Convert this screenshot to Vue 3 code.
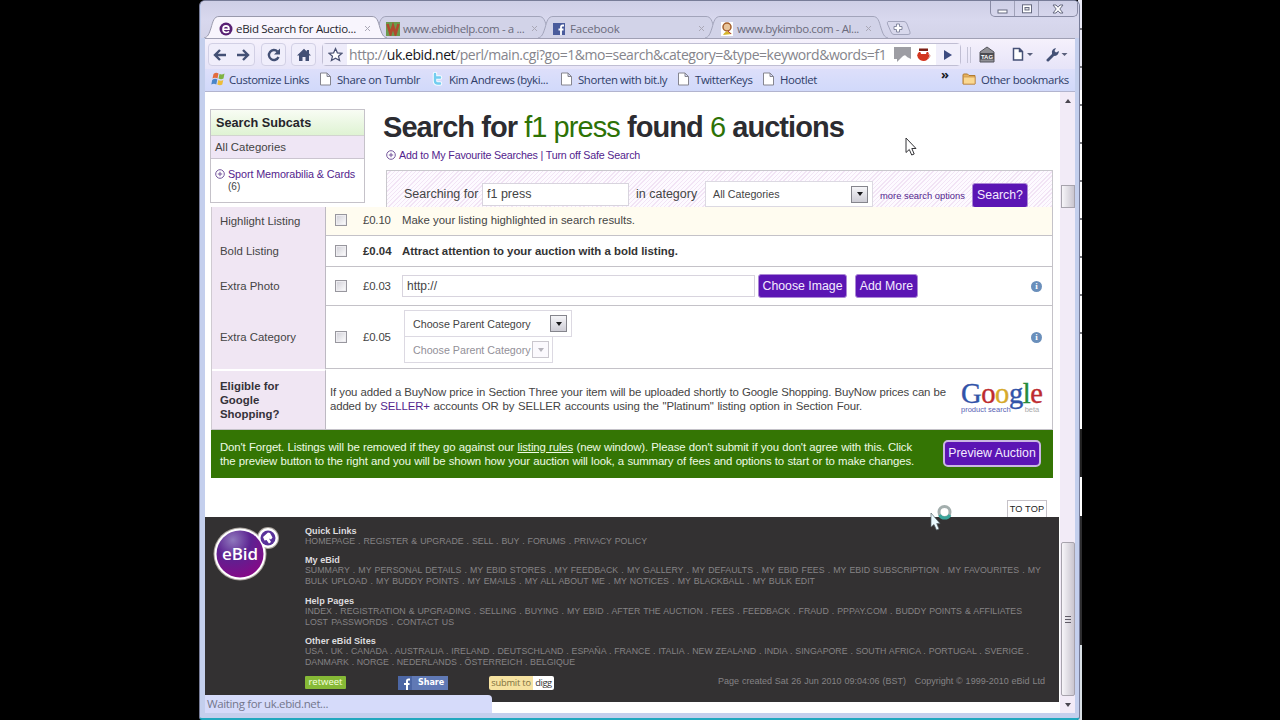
<template>
  <div class="screen">
    <div class="behind">
      <i v-for="n in 9" :key="n" class="behind-mark"></i>
    </div>
    <div class="window">
      <div class="titlebar">
        <div class="tabs">
          <div v-for="(tab, idx) in tabs" :key="tab.title" class="tab" :class="{ active: idx === 0 }">
            <svg class="tab-shape" viewBox="0 0 183 22" width="183" height="22">
              <path d="M0 22 C4 21 5 18 7 12 C9 5 10 .5 15 .5 H168 C173 .5 174 5 176 12 C178 18 179 21 183 22" />
            </svg>
            <svg class="favicon" viewBox="0 0 14 14" width="14" height="14">
              <template v-if="tab.icon === 'ebid'">
                <circle cx="7" cy="7" r="6.5" fill="#582073" />
                <path d="M4 7.2H10C10 2.8 4 2.8 4 7.2C4 11 8 11.200 10 9.300" fill="none" stroke="#fff" stroke-width="1.6" />
              </template>
              <template v-else-if="tab.icon === 'help'">
                <rect width="14" height="14" fill="#6b9b4d" />
                <path d="M1.500 2L4.500 12L7 4L9.500 12L12.500 2" fill="none" stroke="#b04a2e" stroke-width="2.600" />
              </template>
              <template v-else-if="tab.icon === 'fb'">
                <rect y="1" width="12" height="12" fill="#4a5c9c" />
                <path d="M11 3.500H9.500Q8 3.500 8 5V13M5.500 7.500H10.500" fill="none" stroke="#fff" stroke-width="1.800" />
              </template>
              <template v-else>
                <rect x="1" width="12" height="14" fill="#fff" />
                <circle cx="7" cy="5" r="4" fill="#e8c49a" stroke="#a35e2c" stroke-width="1.500" />
                <path d="M3 13Q7 6 12 12Z" fill="#d6b52c" />
                <path d="M8 9L11 12" stroke="#b33c52" />
              </template>
            </svg>
            <span class="tab-title" :class="'t-' + tab.icon">{{ tab.title }}</span>
            <svg class="tab-close" viewBox="0 0 7 7" width="7" height="7"><path d="M1 1L6 6M6 1L1 6" /></svg>
          </div>
          <svg class="new-tab" viewBox="0 0 26 14" width="26" height="14">
            <path d="M2 .5H18Q20 .5 21 3L24 11Q25 13.500 22 13.500H8Q6 13.500 5 11L1.500 3Q1 .5 2 .5Z" fill="#d8d8ec" stroke="#a3a5bd" />
            <path d="M10.500 3H13.500V5.500H16V8.500H13.500V11H10.500V8.500H8V5.500H10.500Z" fill="#fff" stroke="#7b7f98" stroke-width=".9" />
          </svg>
        </div>
        <div class="win-buttons">
          <span class="wb"><svg viewBox="0 0 12 10" width="12" height="10"><rect x="1" y="6" width="9" height="3" fill="#fff" stroke="#666a80" /></svg></span>
          <span class="wb"><svg viewBox="0 0 12 10" width="12" height="10"><rect x="1.500" y=".8" width="9" height="8" fill="#fff" stroke="#666a80" /><rect x="4" y="3.500" width="4" height="2.500" fill="#ddd" stroke="#666a80" /></svg></span>
          <span class="wb wide"><svg viewBox="0 0 12 10" width="12" height="10"><path d="M1 1H4L6 3.200L8 1H11L7.800 5L11 9H8L6 6.800L4 9H1L4.200 5Z" fill="#fff" stroke="#666a80" /></svg></span>
        </div>
      </div>

      <div class="toolbar">
        <div class="nav-group">
          <svg viewBox="0 0 14 12" width="14" height="12"><path d="M13 6H3M7 1L2 6L7 11" class="nav-stroke" /></svg>
          <svg viewBox="0 0 14 12" width="14" height="12"><path d="M1 6H11M7 1L12 6L7 11" class="nav-stroke" /></svg>
        </div>
        <div class="nav-btn reload">
          <svg viewBox="0 0 14 14" width="14" height="14"><path d="M11.500 9A5 5 0 1 1 10.500 3.500" class="nav-stroke" /><path d="M13 .5V6.500H7Z" fill="#435075" /></svg>
        </div>
        <div class="nav-btn home">
          <svg viewBox="0 0 14 14" width="14" height="14"><path d="M7 .8L0 7.500H2V13H5.500V9H8.500V13H12V7.500H14L12 5.500V2H9.800V3.500Z" fill="#435075" /></svg>
        </div>
        <div class="omnibox">
          <div class="star">
            <svg viewBox="0 0 16 15" width="15" height="15"><path d="M8 1.200L10 5.700L15 6.200L11.200 9.400L12.400 14L8 11.500L3.600 14L4.800 9.400L1 6.200L6 5.700Z" fill="#fff" stroke="#4a5272" stroke-width="1.300" /></svg>
          </div>
          <div class="url">
            <span class="url-text">http://<b>uk.ebid.net</b>/perl/main.cgi?go=1&amp;mo=search&amp;category=&amp;type=keyword&amp;words=f1</span>
            <svg class="url-flag" viewBox="0 0 18 17" width="18" height="17"><path d="M0 1H17V13L13 11Q11 7 7 12L3 16V13H0Z" fill="#9d9da3" /></svg>
            <svg class="url-pot" viewBox="0 0 16 15" width="16" height="15">
              <path d="M3 1.500H12V4H3Z" fill="#7d1f16" />
              <path d="M3 5Q-1 9 4 13Q8 15 11 13Q15 9 12 5Z" fill="#d3351f" />
              <path d="M4 4H11L10 7H5Z" fill="#fff" />
              <path d="M12 7Q16 8 12 12" fill="none" stroke="#d98f86" />
            </svg>
          </div>
          <div class="go"><svg viewBox="0 0 10 12" width="10" height="12"><path d="M1 1L9 6L1 11Z" fill="#3c4b80" /></svg></div>
        </div>
        <div class="grip"></div>
        <svg class="tag" viewBox="0 0 16 17" width="16" height="17">
          <path d="M1 6L8 1L15 6V16H1Z" fill="#909095" stroke="#55555c" />
          <rect x="1" y="7" width="14" height="6.500" fill="#4b4b50" />
          <text x="8" y="12.500" text-anchor="middle" font-size="6" font-weight="700" fill="#fff" font-family="Liberation Sans, sans-serif">TAG</text>
        </svg>
        <svg class="page-menu" viewBox="0 0 21 15" width="21" height="15"><path d="M1.500 1.500H7.500L10.500 4.500V13H1.500ZM7.500 1.500V4.500H10.500" fill="#fff" stroke="#455076" stroke-width="1.500" /><path d="M15 6H21L18 9Z" fill="#59607c" /></svg>
        <svg class="wrench" viewBox="0 0 23 15" width="23" height="15"><path d="M1.500 12.500L7 7Q6 2 11 1L9.500 4L11 5.500L14 4Q13.500 9 9 9L3.500 14.500Q1 15 1.500 12.500Z" fill="#435075" /><path d="M16.500 6H22.500L19.500 9Z" fill="#59607c" /></svg>
      </div>

      <div class="bookmarks">
        <div v-for="bm in bookmarks" :key="bm.text" class="bm" :style="{ width: bm.width + 'px' }">
          <svg v-if="bm.icon === 'windows'" viewBox="0 0 15 14" width="15" height="14">
            <path d="M2.500 2Q5 0 7.500 1.500L6.500 6.500Q4 5 1.500 6.500Z" fill="#e26b3e" /><path d="M8.500 2Q11 3 13.500 1.500L12.500 6.500Q10 8 7.500 6.500Z" fill="#7fb344" />
            <path d="M1.200 8Q4 6 6.300 7.500L5.300 12.500Q3 11 .3 12.500Z" fill="#4a86c9" /><path d="M7.300 8Q10 9.500 12.300 8L11.300 12.500Q9 14 6.300 12.500Z" fill="#edbd3a" />
          </svg>
          <svg v-else-if="bm.icon === 'twitter'" viewBox="0 0 15 14" width="15" height="14"><path d="M4 2V9Q4 11.500 7 11.500H9M4 5.500H9" fill="none" stroke="#f4fbff" stroke-width="4.500" stroke-linecap="round" /><path d="M4 2V9Q4 11.500 7 11.500H9M4 5.500H9" fill="none" stroke="#72cdf0" stroke-width="2.400" stroke-linecap="round" /></svg>
          <svg v-else viewBox="0 0 15 14" width="15" height="14"><path d="M1.500 1H8L11.500 4.500V13H1.500ZM8 1V4.500H11.500" fill="#fff" stroke="#85858f" /></svg>
          <span>{{ bm.text }}</span>
        </div>
        <div class="bm-more">»</div>
        <div class="bm other">
          <svg viewBox="0 0 15 14" width="15" height="14"><path d="M1 3Q1 2 2 2H5.500L7 3.500H13V12H1Z" fill="#e7b25e" stroke="#b17b31" /><path d="M1.500 5H13V12H1.500Z" fill="#fad891" stroke="#c38e42" stroke-width=".7" /></svg>
          <span>Other bookmarks</span>
        </div>
      </div>

      <div class="viewport">
        <div class="page">
          <div class="search-page">
            <div class="subcats">
              <div class="sub-head">Search Subcats</div>
              <div class="sub-all">All Categories</div>
              <div class="sub-item">
                <svg class="plus" viewBox="0 0 10 10" width="10" height="10"><circle cx="5" cy="5" r="4.300" /><path d="M2.800 5H7.200M5 2.800V7.200" /></svg>
                <div class="sub-link"><a>Sport Memorabilia &amp; Cards</a><small>(6)</small></div>
              </div>
            </div>
            <div class="results">
              <h1>Search for <em>f1 press</em> found <em>6</em> auctions</h1>
              <div class="fav">
                <svg class="plus" viewBox="0 0 10 10" width="10" height="10"><circle cx="5" cy="5" r="4.300" /><path d="M2.800 5H7.200M5 2.800V7.200" /></svg>
                <span class="fav-text">Add to My Favourite Searches | Turn off Safe Search</span>
              </div>
              <div class="search-box">
                <span class="searching">Searching for</span>
                <div class="input term">f1 press</div>
                <span class="in-cat">in category</span>
                <div class="select cat"><span>All Categories</span><i class="arrow"></i></div>
                <a class="more">more search options</a>
                <div class="btn search-btn">Search?</div>
              </div>
            </div>
          </div>

          <div class="listing">
            <div class="row highlight">
              <div class="label">Highlight Listing</div>
              <div class="cell"><i class="check"></i><span class="price">£0.10</span><span class="desc">Make your listing highlighted in search results.</span></div>
            </div>
            <div class="row bold">
              <div class="label">Bold Listing</div>
              <div class="cell"><i class="check"></i><span class="price">£0.04</span><span class="desc">Attract attention to your auction with a bold listing.</span></div>
            </div>
            <div class="row photo">
              <div class="label">Extra Photo</div>
              <div class="cell">
                <i class="check"></i><span class="price">£0.03</span>
                <div class="input http">http://</div>
                <div class="btn choose">Choose Image</div>
                <div class="btn add">Add More</div>
                <i class="info">i</i>
              </div>
            </div>
            <div class="row category">
              <div class="label">Extra Category</div>
              <div class="cell">
                <i class="check"></i><span class="price">£0.05</span>
                <div class="selects">
                  <div class="select parent"><span>Choose Parent Category</span><i class="arrow"></i></div>
                  <div class="select parent off"><span>Choose Parent Category</span><i class="arrow"></i></div>
                </div>
                <i class="info">i</i>
              </div>
            </div>
            <div class="row google">
              <div class="label">Eligible for<br>Google<br>Shopping?</div>
              <div class="cell">
                <div class="buynow">
                  <div class="fit tight w615">If you added a BuyNow price in Section Three your item will be uploaded shortly to Google Shopping. BuyNow prices can be</div>
                  <div class="fit tight w531">added by <a>SELLER+</a> accounts OR by SELLER accounts using the "Platinum" listing option in Section Four.</div>
                </div>
                <div class="glogo">
                  <div class="gword"><span class="gb">G</span><span class="gr">o</span><span class="gy">o</span><span class="gb">g</span><span class="gg">l</span><span class="gr">e</span></div>
                  <div class="gsub"><span>product search</span><span class="beta">beta</span></div>
                </div>
              </div>
            </div>
            <div class="notice">
              <div class="notice-text">
                <div class="fit tight w692">Don't Forget. Listings will be removed if they go against our <u>listing rules</u> (new window). Please don't submit if you don't agree with this. Click</div>
                <div class="fit tight w694">the preview button to the right and you will be shown how your auction will look, a summary of fees and options to start or to make changes.</div>
              </div>
              <div class="btn preview">Preview Auction</div>
            </div>
          </div>

          <div class="top-strip"><div class="to-top">TO TOP</div></div>

          <div class="footer">
            <svg class="logo" viewBox="0 0 68 58" width="68" height="58">
              <defs>
                <radialGradient id="orb" cx=".35" cy=".2" r=".85"><stop offset="0" stop-color="#8f79bd" /><stop offset=".45" stop-color="#5c2291" /><stop offset="1" stop-color="#870887" /></radialGradient>
              </defs>
              <circle cx="55" cy="13" r="11" fill="#aaa49e" /><circle cx="27" cy="29" r="26.500" fill="#aaa49e" />
              <circle cx="55" cy="13" r="10" fill="#fff" /><circle cx="27" cy="29" r="25.500" fill="#fff" />
              <circle cx="27" cy="29" r="23.500" fill="url(#orb)" />
              <circle cx="55" cy="13" r="7.500" fill="#59319a" />
              <path d="M50 12L55 7.500L57 8L59.500 12.500L58 14.500L56 13.500L58 17L56 18.500L53.500 15L51.500 15.500Z" fill="#fff" />
              <text x="27" y="35" text-anchor="middle" font-size="17" font-weight="600" fill="#fff" textLength="36" font-family="Open Sans, sans-serif">eBid</text>
            </svg>
            <div class="links">
              <div v-for="group in footerGroups" :key="group.title" class="group">
                <h4>{{ group.title }}</h4>
                <div v-for="line in group.lines" :key="line.text" class="fit link-line" :style="{ width: line.width + 'px' }">{{ line.text }}</div>
              </div>
              <div class="share-row">
                <span class="retweet">retweet</span>
                <span class="fb-share"><svg viewBox="0 0 14 14" width="14" height="14"><rect width="14" height="14" fill="#4c66a4" /><path d="M12 3.500H10.500Q9 3.500 9 5V14M6 8H11.500" fill="none" stroke="#fff" stroke-width="2" /></svg><b>Share</b></span>
                <span class="digg"><span class="submit">submit to</span><span class="digg-name">digg</span></span>
                <span class="fit copyright">Page created Sat 26 Jun 2010 09:04:06 (BST) &nbsp; Copyright © 1999-2010 eBid Ltd</span>
              </div>
            </div>
          </div>
        </div>

        <div class="scrollbar">
          <svg class="sb-arrow" viewBox="0 0 6 4" width="6" height="4"><path d="M0 4L3 0L6 4Z" /></svg>
          <div class="old-thumb"></div>
          <div class="thumb"><i></i><i></i><i></i></div>
          <svg class="sb-arrow" viewBox="0 0 6 4" width="6" height="4"><path d="M0 0L3 4L6 0Z" /></svg>
        </div>
        <div class="status">Waiting for uk.ebid.net...</div>
      </div>
    </div>

    <svg class="cursor arrow-cursor" viewBox="0 0 12 19" width="12" height="19"><path d="M1 1V15.500L4.300 12.500L6.700 18L9.200 17L6.800 11.500H11Z" fill="#fff" stroke="#343438" /></svg>
    <svg class="cursor busy-cursor" viewBox="0 0 24 28" width="24" height="28">
      <circle cx="14.500" cy="8" r="5.500" fill="#fff" stroke="#a3aead" stroke-width="3" />
      <path d="M9.500 11A6 6 0 0 0 20 11" fill="none" stroke="#39a59b" stroke-width="3" />
      <path d="M1 9V23L4 20.500L6.500 26L9 25L6.700 19.500H10Z" fill="#eafaff" stroke="#58666c" stroke-width=".7" />
    </svg>
  </div>
</template>

<script setup>
const tabs = [
  { title: 'eBid Search for Auctio...', icon: 'ebid' },
  { title: 'www.ebidhelp.com - a ...', icon: 'help' },
  { title: 'Facebook', icon: 'fb' },
  { title: 'www.bykimbo.com - Al...', icon: 'kimbo' }
];

const bookmarks = [
  { text: 'Customize Links', icon: 'windows', width: 108 },
  { text: 'Share on Tumblr', icon: 'page', width: 112 },
  { text: 'Kim Andrews (byki...', icon: 'twitter', width: 129 },
  { text: 'Shorten with bit.ly', icon: 'page', width: 117 },
  { text: 'TwitterKeys', icon: 'page', width: 85 },
  { text: 'Hootlet', icon: 'page', width: 60 }
];

const footerGroups = [
  {
    title: 'Quick Links',
    lines: [{ text: 'HOMEPAGE . REGISTER & UPGRADE . SELL . BUY . FORUMS . PRIVACY POLICY', width: 342 }]
  },
  {
    title: 'My eBid',
    lines: [
      { text: 'SUMMARY . MY PERSONAL DETAILS . MY EBID STORES . MY FEEDBACK . MY GALLERY . MY DEFAULTS . MY EBID FEES . MY EBID SUBSCRIPTION . MY FAVOURITES . MY', width: 736 },
      { text: 'BULK UPLOAD . MY BUDDY POINTS . MY EMAILS . MY ALL ABOUT ME . MY NOTICES . MY BLACKBALL . MY BULK EDIT', width: 510 }
    ]
  },
  {
    title: 'Help Pages',
    lines: [
      { text: 'INDEX . REGISTRATION & UPGRADING . SELLING . BUYING . MY EBID . AFTER THE AUCTION . FEES . FEEDBACK . FRAUD . PPPAY.COM . BUDDY POINTS & AFFILIATES', width: 717 },
      { text: 'LOST PASSWORDS . CONTACT US', width: 149 }
    ]
  },
  {
    title: 'Other eBid Sites',
    lines: [
      { text: 'USA . UK . CANADA . AUSTRALIA . IRELAND . DEUTSCHLAND . ESPAÑA . FRANCE . ITALIA . NEW ZEALAND . INDIA . SINGAPORE . SOUTH AFRICA . PORTUGAL . SVERIGE .', width: 724 },
      { text: 'DANMARK . NORGE . NEDERLANDS . ÖSTERREICH . BELGIQUE', width: 270 }
    ]
  }
];
</script>

<style>
body {
  background: #000;
}
</style>

<style scoped>
* {
  box-sizing: border-box;
}
.screen {
  position: relative;
  width: 1280px;
  height: 720px;
  overflow: hidden;
  background: #000;
  padding-left: 199px;
  font-family: 'Liberation Sans', Arial, sans-serif;
  font-size: 11.4px;
  color: #444;
}
svg {
  display: block;
  flex-shrink: 0;
}
a {
  color: #53248d;
}
.behind {
  position: absolute;
  left: 1078px;
  top: 0;
  width: 4px;
  height: 720px;
  background: linear-gradient(#e9e9f4 0 90px, #fff 90px 429px, #222 429px 477px, #fff 477px 516px, #2d2d2f 516px 645px, #d9dfe4 645px 720px);
  display: flex;
  flex-direction: column;
  gap: 36px;
  padding-top: 28px;
}
.behind-mark {
  width: 4px;
  height: 2px;
  background: #77777d;
}
.window {
  position: relative;
  width: 881px;
  height: 720px;
  padding-left: 1px;
  border: 1px solid #777c98;
  border-bottom: 2px solid #21a8bf;
  border-radius: 6px 6px 3px 3px;
  background: #c4cfed;
  display: flex;
  flex-direction: column;
  overflow: hidden;
  font-family: 'Open Sans', 'Noto Sans', sans-serif;
}
.titlebar {
  height: 37px;
  flex-shrink: 0;
  background: linear-gradient(#cecfe6, #d8d8ee 50%, #d3d3e8);
  display: flex;
  justify-content: space-between;
  padding-left: 3px;
}
.tabs {
  display: flex;
  align-items: flex-end;
}
.tab {
  position: relative;
  width: 183px;
  height: 22px;
  margin-right: -16px;
  display: flex;
  align-items: center;
  padding: 3px 16px 0 15px;
  color: #6b6b7c;
}
.tab.active {
  color: #25252d;
  z-index: 2;
}
.tab-shape {
  position: absolute;
  left: 0;
  top: 0;
  fill: #d2d3e8;
  stroke: #a2a4ba;
}
.active .tab-shape {
  fill: #f8f5fd;
  stroke: #9999ac;
}
.favicon {
  position: relative;
}
.tab-title {
  position: relative;
  margin-left: 3px;
  flex: 1;
  font-size: 11.5px;
  white-space: nowrap;
  letter-spacing: -0.3px;
}
.t-fb { letter-spacing: -0.2px; }
.t-help, .t-kimbo { letter-spacing: -0.4px; }
.tab-close {
  position: relative;
  stroke: #aaa8b6;
  fill: none;
}
.new-tab {
  margin: 0 0 3px 14px;
}
.win-buttons {
  display: flex;
  height: 16px;
  width: 88px;
  margin-right: 1px;
  border: 1px solid #898ba5;
  border-top: 0;
  border-radius: 0 0 5px 5px;
}
.wb {
  width: 24px;
  display: flex;
  justify-content: center;
  align-items: center;
  border-right: 1px solid #a0a1b8;
}
.wb.wide {
  flex: 1;
  border: 0;
}
.toolbar {
  height: 31px;
  flex-shrink: 0;
  margin: 0 4px;
  border-top: 1px solid #a0a0b4;
  background: linear-gradient(#f5f1fc, #e6e4f8);
  display: flex;
  align-items: center;
  padding: 1px 0 0 3px;
}
.nav-group, .nav-btn {
  height: 23px;
  border: 1px solid #d2d0e5;
  border-radius: 4px;
  background: #f0eefb;
  display: flex;
  align-items: center;
  justify-content: center;
}
.nav-group {
  width: 47px;
  gap: 9px;
}
.nav-btn {
  width: 25px;
}
.reload { margin-left: 6px; }
.home { margin-left: 5px; }
.nav-stroke {
  fill: none;
  stroke: #435075;
  stroke-width: 2.4;
}
.omnibox {
  margin-left: 6px;
  width: 639px;
  height: 23px;
  border: 1px solid #c0bed3;
  border-radius: 4px;
  display: flex;
}
.star {
  width: 24px;
  display: flex;
  align-items: center;
  justify-content: center;
  background: #eeecfa;
}
.url {
  flex: 1;
  background: #fff;
  display: flex;
  align-items: center;
  padding-left: 2px;
}
.url-text {
  width: 541px;
  font-size: 14px;
  color: #85858c;
  white-space: nowrap;
  letter-spacing: -0.46px;
}
.url-text b {
  font-weight: 400;
  color: #15151a;
}
.url-flag { margin-left: 4px; }
.url-pot { margin-left: 4px; }
.go {
  width: 24px;
  background: #f1effb;
  display: flex;
  align-items: center;
  justify-content: center;
}
.grip {
  width: 4px;
  height: 16px;
  margin-left: 6px;
  border-left: 1px solid #c4c3d6;
  border-right: 1px solid #c4c3d6;
}
.tag { margin-left: 8px; }
.page-menu { margin-left: 17px; }
.wrench { margin-left: 12px; }
.bookmarks {
  height: 23px;
  flex-shrink: 0;
  margin: 0 4px;
  padding: 0 0 2px 6px;
  border-bottom: 1px solid #b2b4ce;
  background: linear-gradient(#dddffa, #d1d9fa);
  display: flex;
  align-items: center;
  color: #2e3c68;
  font-size: 11.4px;
}
.bm {
  display: flex;
  align-items: center;
  gap: 3px;
  white-space: nowrap;
  letter-spacing: -0.38px;
}
.bm-more {
  margin-left: 119px;
  margin-top: -10px;
  width: 21px;
  font-size: 13px;
  font-weight: 700;
  color: #181a22;
}
.other {
  gap: 4px;
}
.viewport {
  position: relative;
  height: 621px;
  margin: 0 4px;
  display: flex;
  background: #fff;
  font-family: 'Liberation Sans', Arial, sans-serif;
}
.page {
  width: 854px;
  display: flex;
  flex-direction: column;
}
.search-page {
  height: 115px;
  padding-left: 6px;
  display: flex;
  overflow: hidden;
}
.subcats {
  width: 155px;
  height: 94px;
  margin-top: 17px;
  border: 1px solid #c5c2c9;
  margin-left: -1px;
}
.sub-head {
  height: 26px;
  padding-left: 5px;
  line-height: 26px;
  font-size: 12.7px;
  font-weight: 700;
  color: #25252a;
  background: linear-gradient(#f8fcf4, #dff3d3);
  border-bottom: 1px solid #d2d4d0;
}
.sub-all {
  height: 23px;
  line-height: 23px;
  padding-left: 4px;
  background: #efe6f5;
  border-bottom: 1px solid #cbc5d0;
}
.sub-item {
  display: flex;
  padding: 9px 0 0 4px;
}
.plus {
  fill: none;
  stroke: #74559b;
  margin: 1px 3px 0 0;
}
.sub-link a {
  display: block;
  font-size: 10.8px;
  letter-spacing: -0.1px;
  line-height: 13px;
  white-space: nowrap;
}
.sub-link small {
  display: block;
  font-size: 10px;
  line-height: 12px;
}
.results {
  margin-left: 18px;
  width: 670px;
}
h1 {
  margin: 16px 0 0;
  height: 38px;
  line-height: 38px;
  font-size: 29px;
  letter-spacing: -0.94px;
  white-space: nowrap;
  color: #2c2c31;
}
h1 em {
  font-style: normal;
  font-weight: 400;
  color: #2d7206;
}
.fav {
  display: flex;
  margin: 3px 0 0 3px;
  height: 14px;
  line-height: 13px;
}
.fav-text {
  font-size: 10.7px;
  letter-spacing: -0.18px;
  color: #53248d;
}
.search-box {
  margin: 7px 0 0 3px;
  height: 48px;
  border: 1px solid #c9c8cd;
  border-bottom: 0;
  background: repeating-linear-gradient(135deg, #fdfaff 0 2px, #f2e4f5 2px 3px);
  display: flex;
  padding: 12px 0 0 17px;
  white-space: nowrap;
  font-size: 12.5px;
}
.searching, .in-cat {
  line-height: 23px;
}
.searching { width: 78px; }
.input {
  border: 1px solid #d8d4de;
  background: #fff;
  padding-left: 4px;
  line-height: 20px;
}
.term {
  width: 147px;
  height: 23px;
}
.in-cat { margin-left: 7px; width: 69px; }
.select {
  background: #fff;
  border: 1px solid #dcd9e2;
  display: flex;
  align-items: center;
  justify-content: space-between;
  font-size: 10.7px;
}
.cat {
  width: 168px;
  height: 26px;
  margin-top: -2px;
  padding: 0 4px 0 7px;
}
.arrow {
  flex-shrink: 0;
  width: 17px;
  height: 17px;
  border: 1px solid #85858c;
  background: linear-gradient(#f5f5f8, #cecdd5);
  display: flex;
  align-items: center;
  justify-content: center;
}
.arrow::after {
  content: '';
  border: 3px solid transparent;
  border-top: 4px solid #17171a;
  border-bottom: 0;
}
.more {
  margin-left: 7px;
  width: 92px;
  font-size: 9.4px;
  line-height: 26px;
}
.btn {
  background: #5b15b4;
  border: 1px solid #ac88d6;
  border-radius: 3px;
  color: #f4ebff;
  font-size: 12.3px;
  text-align: center;
  white-space: nowrap;
}
.search-btn {
  width: 56px;
  height: 25px;
  line-height: 23px;
}
.listing {
  margin-left: 6px;
  width: 842px;
  height: 271px;
  border-left: 1px solid #cfcad1;
  display: flex;
  flex-direction: column;
}
.row {
  display: flex;
  flex-shrink: 0;
}
.label {
  width: 114px;
  background: #f0e6f3;
  border-right: 1px solid #bdb9c2;
  padding: 0 0 2px 8px;
  display: flex;
  align-items: center;
}
.cell {
  flex: 1;
  display: flex;
  align-items: center;
  border-bottom: 1px solid #c4c2c8;
  border-right: 1px solid #c4c2c8;
  padding-left: 9px;
  white-space: nowrap;
}
.highlight { height: 29px; }
.highlight .cell { background: #fffcf0; padding-bottom: 2px; }
.bold { height: 31px; }
.bold .cell { font-weight: 700; color: #333; }
.photo { height: 39px; }
.category { height: 63px; }
.google { height: 61px; }
.google .label {
  border-top: 2px solid #fff;
  border-bottom: 1px solid #c4c2c8;
  padding-bottom: 0;
  font-weight: 700;
  line-height: 14px;
  color: #35323a;
}
.check {
  width: 12px;
  height: 12px;
  border: 1px solid #98979e;
  background: linear-gradient(135deg, #cfced6, #fff);
  box-shadow: inset 0 0 0 1px #eeedf1;
}
.price {
  margin-left: 16px;
  width: 39px;
  letter-spacing: -0.15px;
}
.bold .price, .bold .desc { letter-spacing: 0; }
.http {
  width: 353px;
  height: 22px;
  font-size: 12px;
}
.choose {
  width: 89px;
  height: 24px;
  margin-left: 3px;
  line-height: 22px;
}
.add {
  width: 63px;
  height: 24px;
  margin-left: 8px;
  line-height: 22px;
}
.info {
  width: 11px;
  height: 11px;
  margin: 0 10px 0 auto;
  border-radius: 50%;
  background: #6a8fbb;
  color: #fff;
  font: 700 9px/11px 'Liberation Serif', serif;
  text-align: center;
}
.selects {
  margin-left: 2px;
  padding-bottom: 1px;
}
.parent {
  width: 168px;
  height: 27px;
  padding: 0 4px 0 8px;
}
.parent.off {
  width: 149px;
  height: 26px;
  border-top: 0;
  padding-right: 3px;
  color: #929098;
}
.off .arrow {
  border-color: #cac7ce;
  background: #fbf9fd;
}
.off .arrow::after {
  border-top-color: #b5b3bb;
}
.fit {
  text-align: justify;
  text-align-last: justify;
  white-space: nowrap;
}
.tight { letter-spacing: -0.13px; }
.w615 { width: 616px; }
.w531 { width: 532px; }
.w692 { width: 692px; }
.w694 { width: 694px; }
.google .cell { padding-left: 4px; }
.buynow {
  width: 616px;
  line-height: 14px;
  padding-bottom: 1px;
}
.glogo {
  margin: 0 0 4px 15px;
  width: 84px;
  height: 34px;
}
.gword {
  font-family: 'Liberation Serif', serif;
  font-size: 28.500px;
  line-height: 28px;
  letter-spacing: -0.4px;
  height: 25px;
  -webkit-text-stroke: 0.4px;
}
.gb { color: #3153a8; }
.gr { color: #bd2b2f; }
.gy { color: #d6a929; }
.gg { color: #278b39; }
.gsub {
  display: flex;
  gap: 14px;
  font-size: 7.5px;
  line-height: 9px;
  color: #5a62b5;
}
.beta { color: #aaa; }
.notice {
  height: 48px;
  background: #347504;
  color: #effbe5;
  display: flex;
  margin-left: -1px;
  padding: 10px 0 0 9px;
  line-height: 14px;
}
.notice-text { width: 694px; }
.preview {
  width: 98px;
  height: 27px;
  margin: 0 0 0 29px;
  border: 2px solid #cab6e3;
  border-radius: 5px;
  line-height: 23px;
}
.top-strip {
  height: 39px;
  display: flex;
  justify-content: flex-end;
  align-items: flex-end;
  padding-right: 12px;
}
.to-top {
  width: 40px;
  height: 17px;
  border: 1px solid #c6c2c8;
  border-bottom: 0;
  text-align: center;
  line-height: 17px;
  font-size: 9.2px;
  letter-spacing: 0.15px;
  color: #222;
  white-space: nowrap;
}
.footer {
  height: 185px;
  background: #333132;
  display: flex;
  padding: 9px 0 0 8px;
}
.logo {
  margin-top: -1px;
}
.links {
  margin-left: 24px;
  color: #858385;
  font-size: 8.8px;
}
.group {
  margin-bottom: 8px;
}
h4 {
  margin: 0;
  height: 10px;
  line-height: 10px;
  font-size: 9.1px;
  color: #dedcdf;
}
.link-line {
  height: 11.2px;
  line-height: 11px;
}
.share-row {
  display: flex;
  align-items: center;
  height: 15px;
  width: 740px;
  margin-top: -1px;
  white-space: nowrap;
}
.retweet {
  width: 41px;
  height: 13px;
  background: #86b936;
  color: #f4ffdf;
  font: 9.5px/12px 'Open Sans', sans-serif;
  text-align: center;
  border-radius: 1px;
}
.fb-share {
  margin-left: 52px;
  width: 50px;
  height: 14px;
  background: #6079b5;
  color: #fff;
  display: flex;
  align-items: center;
  gap: 6px;
  font: 8px 'DejaVu Sans', sans-serif;
}
.digg {
  margin-left: 41px;
  width: 65px;
  height: 14px;
  display: flex;
  font: 9.3px/13px 'Open Sans', sans-serif;
  border-radius: 2px;
  overflow: hidden;
}
.submit {
  width: 44px;
  background: #f6e2a1;
  color: #7e713f;
  text-align: center;
  letter-spacing: -0.2px;
}
.digg-name {
  flex: 1;
  background: #fff;
  color: #333;
  text-align: center;
  letter-spacing: -0.4px;
}
.copyright {
  margin: 0 0 3px auto;
  width: 327px;
  font-size: 9px;
}
.scrollbar {
  width: 16px;
  background: #f2ebf7;
  border-left: 1px solid #fff;
  display: flex;
  flex-direction: column;
  align-items: center;
  padding: 7px 0 6px;
}
.sb-arrow {
  fill: #4a4650;
}
.old-thumb {
  width: 14px;
  height: 23px;
  margin-top: 82px;
  border: 1px solid #a7a3ad;
  background: linear-gradient(90deg, #f7f5f9, #c9c5cf);
}
.thumb {
  width: 14px;
  height: 154px;
  margin-top: 334px;
  margin-bottom: auto;
  border: 1px solid #a7a3ad;
  border-radius: 2px;
  background: linear-gradient(90deg, #f7f5f9, #c9c5cf);
  display: flex;
  flex-direction: column;
  align-items: center;
  justify-content: center;
  gap: 2px;
}
.thumb i {
  width: 6px;
  height: 1px;
  background: #5f5b66;
}
.status {
  position: absolute;
  left: 0;
  bottom: 0;
  width: 287px;
  height: 18px;
  padding-left: 2px;
  border-radius: 0 4px 0 0;
  background: #d6dbfa;
  color: #73768c;
  font: 11.5px/18px 'Open Sans', sans-serif;
  letter-spacing: -0.38px;
}
.cursor {
  position: absolute;
}
.arrow-cursor {
  left: 905px;
  top: 137px;
}
.busy-cursor {
  left: 930px;
  top: 504px;
}
</style>
